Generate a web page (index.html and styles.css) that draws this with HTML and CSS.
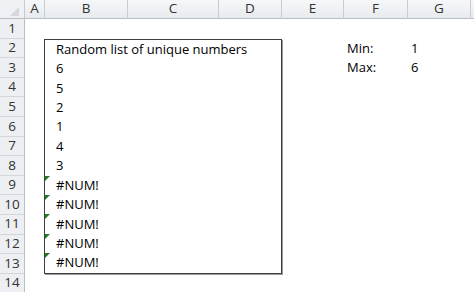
FILE: index.html
```html
<!DOCTYPE html>
<html>
<head>
<meta charset="utf-8">
<link rel="stylesheet" href="styles.css">
</head>
<body>
<div class="sheet">
  <div class="corner"><span class="corner-tri"></span></div>
  <div class="ch">A</div>
  <div class="ch">B</div>
  <div class="ch">C</div>
  <div class="ch">D</div>
  <div class="ch">E</div>
  <div class="ch">F</div>
  <div class="ch">G</div>
  <div class="ch last"></div>

  <div class="rh">1</div>
  <div class="rh">2</div>
  <div class="rh">3</div>
  <div class="rh">4</div>
  <div class="rh">5</div>
  <div class="rh">6</div>
  <div class="rh">7</div>
  <div class="rh">8</div>
  <div class="rh">9</div>
  <div class="rh">10</div>
  <div class="rh">11</div>
  <div class="rh">12</div>
  <div class="rh">13</div>
  <div class="rh">14</div>

  <div class="box">
    <div class="cell">Random list of unique numbers</div>
    <div class="cell">6</div>
    <div class="cell">5</div>
    <div class="cell">2</div>
    <div class="cell">1</div>
    <div class="cell">4</div>
    <div class="cell">3</div>
    <div class="cell err">#NUM!</div>
    <div class="cell err">#NUM!</div>
    <div class="cell err">#NUM!</div>
    <div class="cell err">#NUM!</div>
    <div class="cell err">#NUM!</div>
  </div>

  <div class="stats">
    <div class="scell">Min:</div>
    <div class="scell">1</div>
    <div class="scell">Max:</div>
    <div class="scell">6</div>
  </div>
</div>
</body>
</html>
```
FILE: styles.css
```css
html, body {
  margin: 0;
  padding: 0;
  background: #ffffff;
}
body {
  width: 474px;
  height: 292px;
  overflow: hidden;
  font-family: "Open Sans", "Liberation Sans", sans-serif;
}
.sheet {
  display: grid;
  grid-template-columns: 25px 20px 83px 91px 63px 62px 64px 63px 1fr;
  grid-template-rows: 19px repeat(14, 19.6px);
  width: 474px;
}
.corner {
  position: relative;
  background: #eef0f3;
  border-right: 1px solid #c6cbd1;
  border-bottom: 1px solid #b9bec5;
  box-sizing: border-box;
}
.corner-tri {
  position: absolute;
  right: 5px;
  bottom: 2px;
  width: 0;
  height: 0;
  border-left: 9px solid transparent;
  border-bottom: 9px solid #d4d8dd;
}
.ch {
  box-sizing: border-box;
  background: linear-gradient(#f6f7f9, #e7eaee);
  border-right: 1px solid #c9cdd3;
  border-bottom: 1px solid #b9bec5;
  color: #333333;
  font-size: 13.5px;
  display: flex;
  align-items: center;
  justify-content: center;
  line-height: 1;
}
.ch.last {
  border-right: none;
}
.rh {
  grid-column: 1;
  box-sizing: border-box;
  background: #edeff2;
  border-right: 1px solid #b9bec5;
  border-bottom: 1px solid #d3d7dc;
  color: #333333;
  font-size: 13.5px;
  display: flex;
  align-items: center;
  justify-content: center;
  line-height: 1;
}
.box {
  grid-column: 3 / 6;
  grid-row: 3 / 15;
  margin-left: -1px;
  border: 1px solid #3f3f3f;
  box-shadow: 1px 1px 0 #9a9a9a;
  display: flex;
  flex-direction: column;
}
.cell {
  position: relative;
  flex: 1;
  display: flex;
  align-items: center;
  padding-left: 11px;
  font-size: 13px;
  color: #000;
  line-height: 1;
}
.cell.err::before {
  content: "";
  position: absolute;
  left: 0;
  top: 0;
  width: 0;
  height: 0;
  border-top: 5px solid #1e7b1e;
  border-right: 5px solid transparent;
}
.stats {
  grid-column: 7 / 9;
  grid-row: 3 / 5;
  display: grid;
  grid-template-columns: 64px 63px;
  grid-template-rows: repeat(2, 19.6px);
}
.scell {
  display: flex;
  align-items: center;
  padding-left: 3px;
  font-size: 13px;
  color: #000;
  line-height: 1;
}
```
